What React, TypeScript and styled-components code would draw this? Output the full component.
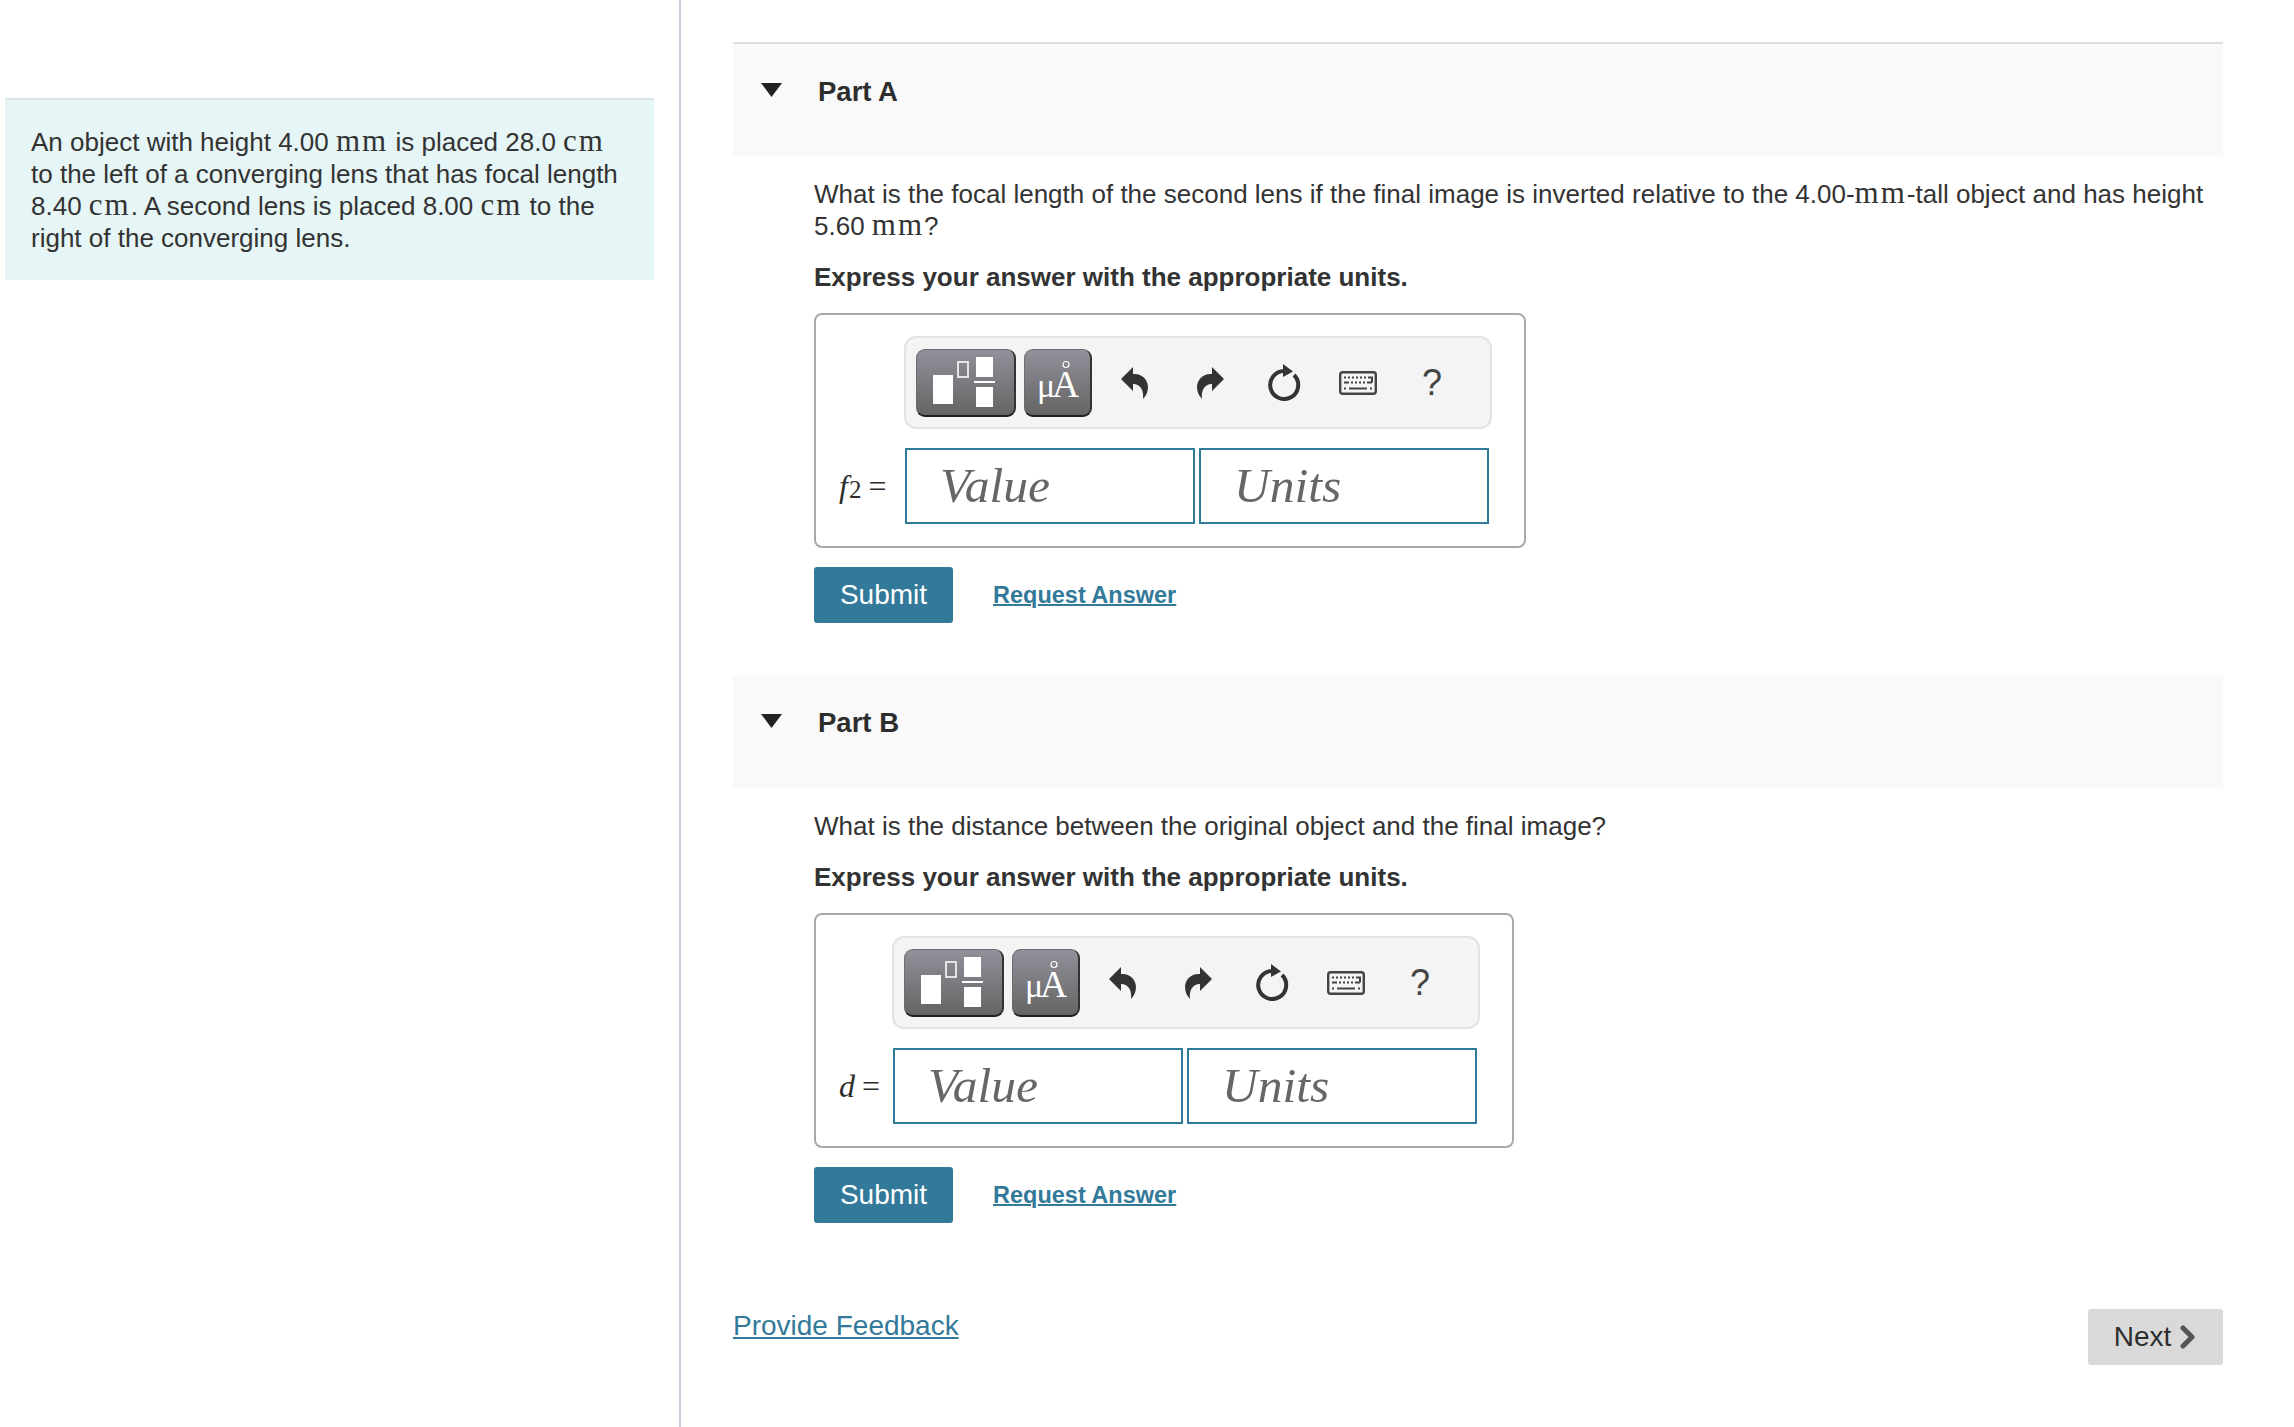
import React from 'react'
import styled, { createGlobalStyle } from 'styled-components'

const Global = createGlobalStyle`
  html, body {
    margin: 0;
    background: #fff;
    font-family: "Liberation Sans", Arial, sans-serif;
    color: #333;
  }
`

const Page = styled.div`
  display: flex;
  width: 2294px;
  height: 1427px;
  overflow: hidden;
`

const Side = styled.aside`
  box-sizing: border-box;
  width: 681px;
  flex: none;
  padding: 98px 0 0 5px;
  border-right: 2px solid #c5d0de;
`

const Intro = styled.div`
  box-sizing: border-box;
  width: 649px;
  height: 182px;
  padding: 26px 26px;
  background: #e6f5f5;
  border-top: 2px solid #dde4e4;
  font-size: 26px;
  line-height: 32px;
`

const Main = styled.main`
  box-sizing: border-box;
  width: 1542px;
  padding: 42px 0 0 52px;
  display: flex;
  flex-direction: column;
`

const PartHead = styled.div<{ $first?: boolean }>`
  box-sizing: border-box;
  height: ${p => (p.$first ? 114 : 113)}px;
  display: flex;
  align-items: flex-start;
  padding: 32px 0 0 28px;
  gap: 35px;
  background: #f9f9f9;
  border-top: ${p => (p.$first ? '2px solid #dedede' : 'none')};
  font-size: 27.5px;
  font-weight: 700;
  line-height: 32px;
  color: #2d2d2d;
`

const Caret = styled.svg`
  width: 21px;
  height: 14px;
  margin-top: 7px;
  margin-right: 1px;
  flex: none;
`

const PartBody = styled.div<{ $bottom: number }>`
  padding: 22px 0 ${p => p.$bottom}px 81px;
`

const Question = styled.p`
  margin: 0;
  font-size: 26px;
  line-height: 32px;
`

const Instruction = styled.p`
  margin: 19px 0 20px;
  font-size: 26px;
  font-weight: 700;
  line-height: 32px;
`

const Unit = styled.span`
  font-family: "Liberation Serif", serif;
  font-size: 31px;
  line-height: 0;
  letter-spacing: 2px;
`

const AnswerBox = styled.div<{ $label: number }>`
  box-sizing: border-box;
  width: fit-content;
  height: 235px;
  border: 2px solid #a9a9a9;
  border-radius: 8px;
  padding: 21px 32px 0 22px;
  display: grid;
  grid-template-columns: ${p => p.$label}px auto;
  grid-template-rows: 93px 76px;
  row-gap: 19px;
  align-content: start;
`

const Toolbar = styled.div`
  grid-column: 2;
  box-sizing: border-box;
  width: 588px;
  height: 93px;
  display: flex;
  align-items: center;
  padding-left: 10px;
  background: #f4f4f4;
  border: 2px solid #e3e3e3;
  border-radius: 12px;
`

const Palette = styled.div<{ $w: number; $gap: number }>`
  box-sizing: border-box;
  width: ${p => p.$w}px;
  height: 68px;
  margin-right: ${p => p.$gap}px;
  flex: none;
  display: flex;
  align-items: center;
  justify-content: center;
  border-radius: 9px;
  background: linear-gradient(#92909a, #646464);
  border: 1px solid #6d6d70;
  border-bottom: 2px solid #1f1f1f;
  border-right: 2px solid #333;

  svg.template { margin-right: 3px; }
`

const Tool = styled.button<{ $w: number }>`
  width: ${p => p.$w}px;
  height: 60px;
  padding: 0;
  border: 0;
  background: none;
  display: flex;
  align-items: center;
  justify-content: center;
  flex: none;
  color: #333;
`

const Help = styled(Tool)`
  font-size: 36px;
  font-family: "Liberation Sans", sans-serif;
  color: #444;
`

const Label = styled.div`
  display: flex;
  align-items: center;
  padding-left: 1px;
  font-family: "Liberation Serif", serif;
  font-size: 32px;
  color: #2d2d2d;
  white-space: nowrap;

  i { margin-right: 1px; }
  span { margin-right: 6px; }
  sub { font-size: 25px; line-height: 0; position: relative; top: 4px; margin-right: 7px; }
`

const Inputs = styled.div`
  display: flex;
  gap: 4px;
  margin-left: 1px;
`

const Field = styled.div`
  box-sizing: border-box;
  width: 290px;
  height: 76px;
  padding-left: 33px;
  border: 2px solid #337a9a;
  font-family: "Liberation Serif", serif;
  font-style: italic;
  font-size: 49.5px;
  line-height: 72px;
  color: #666;
`

const Actions = styled.div`
  display: flex;
  align-items: center;
  gap: 40px;
  margin-top: 19px;
`

const Submit = styled.button`
  width: 139px;
  height: 56px;
  padding: 0;
  border: 0;
  border-radius: 3px;
  background: #337a9a;
  color: #fff;
  font-family: "Liberation Sans", sans-serif;
  font-size: 28px;
`

const RequestLink = styled.a`
  font-size: 23.5px;
  font-weight: 700;
  color: #337a9a;
  text-decoration: underline;
  text-decoration-thickness: 2px;
`

const Footer = styled.div`
  display: flex;
  justify-content: space-between;
  align-items: flex-start;
`

const Feedback = styled.a`
  margin-top: 0;
  font-size: 28px;
  line-height: 34px;
  color: #337a9a;
  text-decoration: underline;
`

const NextButton = styled.button`
  width: 135px;
  height: 56px;
  display: flex;
  align-items: center;
  justify-content: center;
  gap: 8px;
  padding: 0;
  border: 0;
  border-radius: 3px;
  background: #d9d9d9;
  color: #2d2d2d;
  font-family: "Liberation Sans", sans-serif;
  font-size: 28px;
`

const TemplateIcon = () => (
  <svg className="template" width="62" height="50" viewBox="0 0 62 50">
    <rect x="0" y="18" width="20" height="29" fill="#fff" />
    <rect x="25" y="5" width="10" height="15" fill="none" stroke="#e4e4e4" strokeWidth="2" />
    <rect x="43" y="0" width="17" height="20" fill="#fff" />
    <rect x="41" y="24" width="21" height="2" fill="#fff" />
    <rect x="43" y="30" width="17" height="20" fill="#fff" />
  </svg>
)

const SymbolIcon = () => (
  <svg width="42" height="44" viewBox="0 0 42 44">
    <text x="0" y="37" fontFamily="Liberation Serif" fontSize="34" fill="#fff">μ</text>
    <text x="15" y="37" fontFamily="Liberation Serif" fontSize="38" fill="#fff">A</text>
    <circle cx="29" cy="4.5" r="3" fill="none" stroke="#fff" strokeWidth="1.2" />
  </svg>
)

const UndoIcon = ({ flip }: { flip?: boolean }) => (
  <svg width="27" height="32" viewBox="0 0 27 32" style={flip ? { transform: 'scaleX(-1)' } : undefined}>
    <path d="M0 12 L12 0 V7 C20 6 27 12 27 20 C27 25 25 29 22 32 C23 24 20 17 12 17 V24 Z" fill="#333" />
  </svg>
)

const RefreshIcon = () => (
  <svg width="33" height="37" viewBox="0 0 33 37">
    <path d="M16 7 A14 14 0 1 0 26 11" fill="none" stroke="#333" strokeWidth="4" />
    <path d="M15 0 L25 7.5 L15 13 Z" fill="#333" />
  </svg>
)

const KeyboardIcon = () => (
  <svg width="38" height="24" viewBox="0 0 38 24">
    <rect x="1.2" y="1.2" width="35.6" height="21.6" rx="2.5" fill="none" stroke="#444" strokeWidth="2.4" />
    <path d="M5 6.5h2M9 6.5h2M13 6.5h2M17 6.5h2M21 6.5h2M25 6.5h2M29 6.5h4v5" stroke="#444" strokeWidth="2" fill="none" />
    <path d="M5 11.5h5M12 11.5h2M16 11.5h2M20 11.5h2M24 11.5h2M28 11.5h5" stroke="#444" strokeWidth="2" fill="none" />
    <path d="M5 17.5h2M10 17.5h18M31 17.5h2" stroke="#444" strokeWidth="2" fill="none" />
  </svg>
)

const AnswerForm = ({ label, symbol, sub }: { label: number; symbol: string; sub?: string }) => (
  <AnswerBox $label={label}>
    <Toolbar>
      <Palette $w={100} $gap={8}><TemplateIcon /></Palette>
      <Palette $w={68} $gap={4}><SymbolIcon /></Palette>
      <Tool $w={76}><UndoIcon /></Tool>
      <Tool $w={76}><UndoIcon flip /></Tool>
      <Tool $w={72}><RefreshIcon /></Tool>
      <Tool $w={76}><KeyboardIcon /></Tool>
      <Help $w={72}>?</Help>
    </Toolbar>
    <Label>
      <i>{symbol}</i>
      {sub ? <sub>{sub}</sub> : <span />}
      =
    </Label>
    <Inputs>
      <Field>Value</Field>
      <Field>Units</Field>
    </Inputs>
  </AnswerBox>
)

const Part = ({ title, first, bottom, label, symbol, sub, children }: {
  title: string
  first?: boolean
  bottom: number
  label: number
  symbol: string
  sub?: string
  children: React.ReactNode
}) => (
  <section>
    <PartHead $first={first}>
      <Caret viewBox="0 0 22 14" preserveAspectRatio="none"><path d="M0 0H22L11 14Z" fill="#222" /></Caret>
      {title}
    </PartHead>
    <PartBody $bottom={bottom}>
      <Question>{children}</Question>
      <Instruction>Express your answer with the appropriate units.</Instruction>
      <AnswerForm label={label} symbol={symbol} sub={sub} />
      <Actions>
        <Submit>Submit</Submit>
        <RequestLink href="#">Request Answer</RequestLink>
      </Actions>
    </PartBody>
  </section>
)

export default function App() {
  return (
    <Page>
      <Global />
      <Side>
        <Intro>
          An object with height 4.00 <Unit>mm</Unit> is placed 28.0 <Unit>cm</Unit> to the left of a converging lens that has focal length 8.40 <Unit>cm</Unit>. A second lens is placed 8.00 <Unit>cm</Unit> to the right of the converging lens.
        </Intro>
      </Side>
      <Main>
        <Part title="Part A" first bottom={52} label={66} symbol="f" sub="2">
          What is the focal length of the second lens if the final image is inverted relative to the 4.00-<Unit>mm</Unit>-tall object and has height 5.60 <Unit>mm</Unit>?
        </Part>
        <Part title="Part B" bottom={86} label={54} symbol="d">
          What is the distance between the original object and the final image?
        </Part>
        <Footer>
          <Feedback href="#">Provide Feedback</Feedback>
          <NextButton>
            Next
            <svg width="18" height="24" viewBox="0 0 18 24">
              <path d="M4 3 L13 12 L4 21" fill="none" stroke="#555" strokeWidth="5" strokeLinecap="round" strokeLinejoin="round" />
            </svg>
          </NextButton>
        </Footer>
      </Main>
    </Page>
  )
}
